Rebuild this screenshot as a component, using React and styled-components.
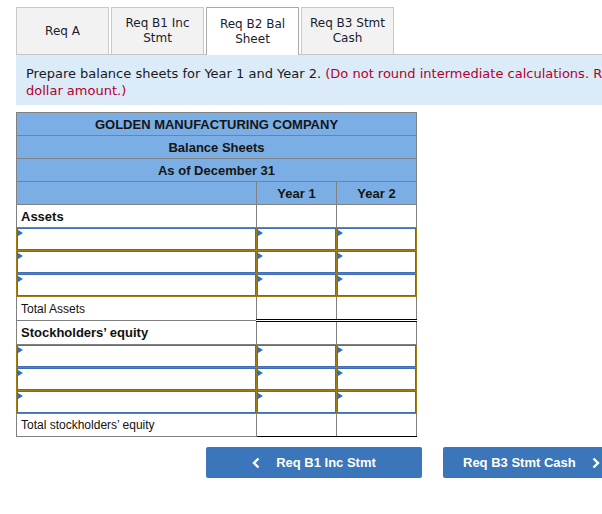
import React from "react";
import styled, { createGlobalStyle, css } from "styled-components";

const GlobalStyle = createGlobalStyle`
  html, body {
    margin: 0;
    padding: 0;
    background: #ffffff;
    overflow: hidden;
  }
  body {
    font-family: "Liberation Sans", Arial, sans-serif;
    color: #222;
  }
`;

const Page = styled.div`
  width: 602px;
  height: 514px;
  overflow: hidden;
  padding: 7px 0 0 16px;
  box-sizing: border-box;
`;

const TabBar = styled.div`
  display: flex;
  gap: 2px;
  width: 1000px;
  border-bottom: 1px solid #c6c6c6;
`;

const Tab = styled.div`
  width: 93px;
  height: 47px;
  box-sizing: border-box;
  display: flex;
  align-items: center;
  justify-content: center;
  text-align: center;
  font-family: "DejaVu Sans", Verdana, sans-serif;
  font-size: 12px;
  line-height: 15px;
  color: #1c1c2c;
  background: #f2f2f2;
  border: 1px solid #c9c9c9;
  border-bottom: none;
  white-space: pre-line;
  ${(p) =>
    p.$active &&
    css`
      background: #ffffff;
      border-color: #a9a9a9;
      margin-bottom: -1px;
      height: 48px;
    `}
`;

const Instructions = styled.div`
  width: 1000px;
  height: 50px;
  box-sizing: border-box;
  padding: 10px 10px 0;
  background: #dbebf8;
  font-family: "DejaVu Sans", Verdana, sans-serif;
  font-size: 13px;
  line-height: 17px;
  color: #1a1a1a;
`;

const Note = styled.span`
  color: #b4002c;
`;

const Sheet = styled.table`
  margin-top: 7px;
  border-collapse: collapse;
  font-family: "Liberation Sans", Arial, sans-serif;
  font-size: 12px;
  color: #111;
`;

const HeadCell = styled.th`
  height: 22px;
  padding: 0;
  background: #7aaee5;
  border: 1px solid #808080;
  font-size: 13px;
  font-weight: bold;
  text-align: center;
  color: #151515;
  ${(p) =>
    p.$year &&
    css`
      border-left-color: #8a6b2a;
    `}
`;

const Cell = styled.td`
  height: 22px;
  padding: 0 4px;
  border: 1px solid #808080;
  background: #ffffff;
  font-size: ${(p) => (p.$bold ? 13 : 12)}px;
  font-weight: ${(p) => (p.$bold ? "bold" : "normal")};
  ${(p) =>
    p.$total &&
    css`
      border-top: 1px solid #000;
      border-bottom: 3px double #000;
    `}
  ${(p) =>
    p.$closing &&
    css`
      border-top: 1px solid #000;
      border-bottom: 1px solid #000;
    `}
`;

const FieldCell = styled.td`
  height: 22px;
  padding: 0;
  border: 1px solid #a07c14;
`;

const Field = styled.div`
  position: relative;
  height: 20px;
  border: 1px solid #3f70b5;
  background: #ffffff;

  &::before {
    content: "";
    position: absolute;
    left: 0;
    top: 1px;
    border-top: 3px solid transparent;
    border-bottom: 3px solid transparent;
    border-left: 5px solid #2a6fc4;
  }
`;

const ButtonRow = styled.div`
  display: flex;
  gap: 21px;
  margin: 10px 0 0 190px;
`;

const NavButton = styled.button`
  flex: none;
  width: ${(p) => p.$width}px;
  height: 31px;
  display: flex;
  align-items: center;
  justify-content: ${(p) => (p.$next ? "flex-start" : "center")};
  gap: 16px;
  padding: 0 0 0 ${(p) => (p.$next ? 20 : 0)}px;
  border: none;
  border-radius: 2px;
  background: #3a76b9;
  color: #ffffff;
  font-family: "Liberation Sans", Arial, sans-serif;
  font-size: 13px;
  font-weight: bold;
  cursor: pointer;
`;

const Chevron = ({ dir }) => (
  <svg width="8" height="12" viewBox="0 0 8 12" aria-hidden="true">
    <path
      d={dir === "left" ? "M6.5 1.5 L2 6 L6.5 10.5" : "M1.5 1.5 L6 6 L1.5 10.5"}
      fill="none"
      stroke="#ffffff"
      strokeWidth="2.4"
    />
  </svg>
);

const InputRow = () => (
  <tr>
    <FieldCell>
      <Field />
    </FieldCell>
    <FieldCell>
      <Field />
    </FieldCell>
    <FieldCell>
      <Field />
    </FieldCell>
  </tr>
);

const tabs = [
  { label: "Req A" },
  { label: "Req B1 Inc\nStmt" },
  { label: "Req B2 Bal\nSheet", active: true },
  { label: "Req B3 Stmt\nCash" },
];

export default function App() {
  return (
    <>
      <GlobalStyle />
      <Page>
        <TabBar>
          {tabs.map((t) => (
            <Tab key={t.label} $active={t.active}>
              {t.label}
            </Tab>
          ))}
        </TabBar>

        <Instructions>
          Prepare balance sheets for Year 1 and Year 2.{" "}
          <Note>
            (Do not round intermediate calculations. Round your answers to the nearest whole
            <br />
            dollar amount.)
          </Note>
        </Instructions>

        <Sheet>
          <colgroup>
            <col style={{ width: 240 }} />
            <col style={{ width: 80 }} />
            <col style={{ width: 80 }} />
          </colgroup>
          <thead>
            <tr>
              <HeadCell colSpan={3}>GOLDEN MANUFACTURING COMPANY</HeadCell>
            </tr>
            <tr>
              <HeadCell colSpan={3}>Balance Sheets</HeadCell>
            </tr>
            <tr>
              <HeadCell colSpan={3}>As of December 31</HeadCell>
            </tr>
            <tr>
              <HeadCell />
              <HeadCell $year>Year 1</HeadCell>
              <HeadCell $year>Year 2</HeadCell>
            </tr>
          </thead>
          <tbody>
            <tr>
              <Cell $bold>Assets</Cell>
              <Cell />
              <Cell />
            </tr>
            <InputRow />
            <InputRow />
            <InputRow />
            <tr>
              <Cell>Total Assets</Cell>
              <Cell $total />
              <Cell $total />
            </tr>
            <tr>
              <Cell $bold>Stockholders’ equity</Cell>
              <Cell />
              <Cell />
            </tr>
            <InputRow />
            <InputRow />
            <InputRow />
            <tr>
              <Cell>Total stockholders’ equity</Cell>
              <Cell $closing />
              <Cell $closing />
            </tr>
          </tbody>
        </Sheet>

        <ButtonRow>
          <NavButton $width={216}>
            <Chevron dir="left" />
            Req B1 Inc Stmt
          </NavButton>
          <NavButton $width={180} $next>
            Req B3 Stmt Cash
            <Chevron dir="right" />
          </NavButton>
        </ButtonRow>
      </Page>
    </>
  );
}
